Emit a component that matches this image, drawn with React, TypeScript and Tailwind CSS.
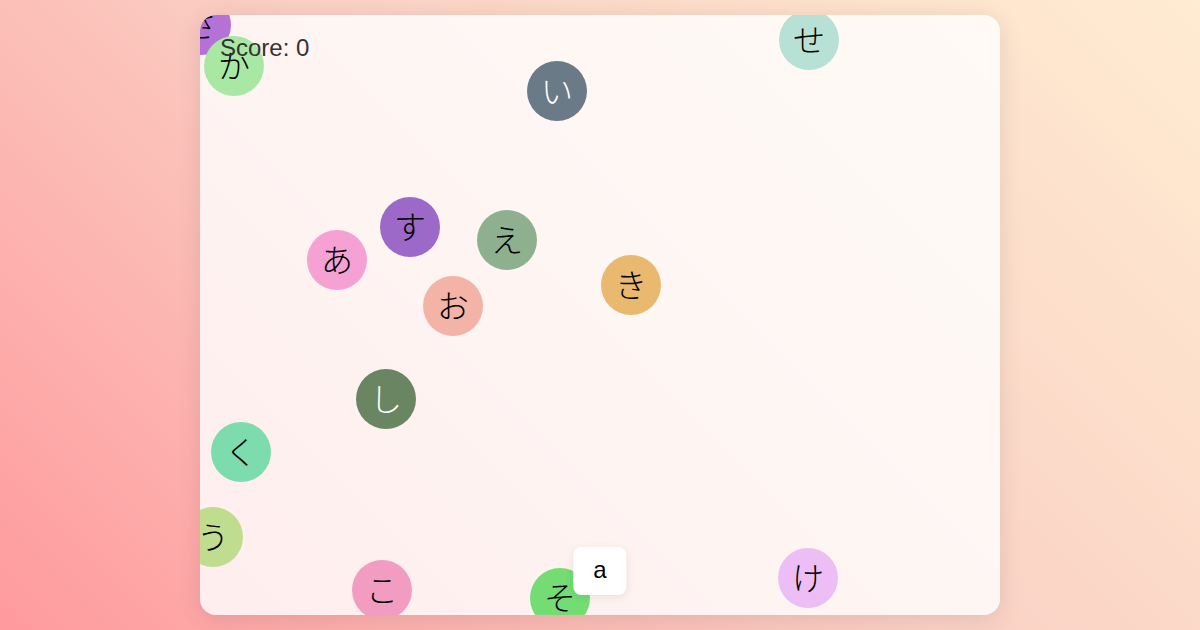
import React from "react";

type Bubble = { ch: string; pos: string; color: string; text: string };

const bubbles: Bubble[] = [
  { ch: "さ", pos: "left-[-29px] top-[-20px]", color: "bg-[#b472d6]", text: "text-black" },
  { ch: "か", pos: "left-[4px] top-[21px]", color: "bg-[#a9e8a4]", text: "text-black" },
  { ch: "い", pos: "left-[327px] top-[46px]", color: "bg-[#6a7a86]", text: "text-white" },
  { ch: "せ", pos: "left-[579px] top-[-5px]", color: "bg-[#b7e1d5]", text: "text-black" },
  { ch: "す", pos: "left-[180px] top-[182px]", color: "bg-[#9c69c8]", text: "text-black" },
  { ch: "え", pos: "left-[277px] top-[195px]", color: "bg-[#8eb08f]", text: "text-black" },
  { ch: "あ", pos: "left-[107px] top-[215px]", color: "bg-[#f5a1d3]", text: "text-black" },
  { ch: "お", pos: "left-[223px] top-[261px]", color: "bg-[#f3b3a6]", text: "text-black" },
  { ch: "き", pos: "left-[401px] top-[240px]", color: "bg-[#e8b96f]", text: "text-black" },
  { ch: "し", pos: "left-[156px] top-[354px]", color: "bg-[#6a8561]", text: "text-white" },
  { ch: "く", pos: "left-[11px] top-[407px]", color: "bg-[#7ddcad]", text: "text-black" },
  { ch: "う", pos: "left-[-17px] top-[492px]", color: "bg-[#bfdc8f]", text: "text-black" },
  { ch: "こ", pos: "left-[152px] top-[545px]", color: "bg-[#f29cc2]", text: "text-black" },
  { ch: "そ", pos: "left-[330px] top-[553px]", color: "bg-[#73dc73]", text: "text-black" },
  { ch: "け", pos: "left-[578px] top-[533px]", color: "bg-[#edbdf5]", text: "text-black" },
];

export default function App() {
  return (
    <div className="w-[1200px] h-[630px] bg-[linear-gradient(45deg,#ff9a9e_0%,#fad0c4_50%,#ffecd2_100%)] flex justify-center pt-[15px] font-['Liberation_Sans',Arial,sans-serif]">
      <div className="relative w-[800px] h-[600px] rounded-2xl bg-white/80 shadow-[0_4px_24px_rgba(0,0,0,0.1)] overflow-hidden">
        {bubbles.map((b) => (
          <div
            key={b.ch}
            className={`absolute w-[60px] h-[60px] rounded-full flex items-center justify-center pb-[5px] text-[32px] leading-none font-light font-['Noto_Sans_CJK_JP',sans-serif] ${b.pos} ${b.color} ${b.text}`}
          >
            {b.ch}
          </div>
        ))}
        <div className="absolute left-5 top-[17px] text-2xl text-[#333333]">Score: 0</div>
        <div className="absolute left-1/2 -translate-x-1/2 bottom-5 bg-white rounded-lg px-5 pt-[7px] pb-[9px] text-2xl text-black shadow-[0_2px_8px_rgba(0,0,0,0.08)]">
          a
        </div>
      </div>
    </div>
  );
}
